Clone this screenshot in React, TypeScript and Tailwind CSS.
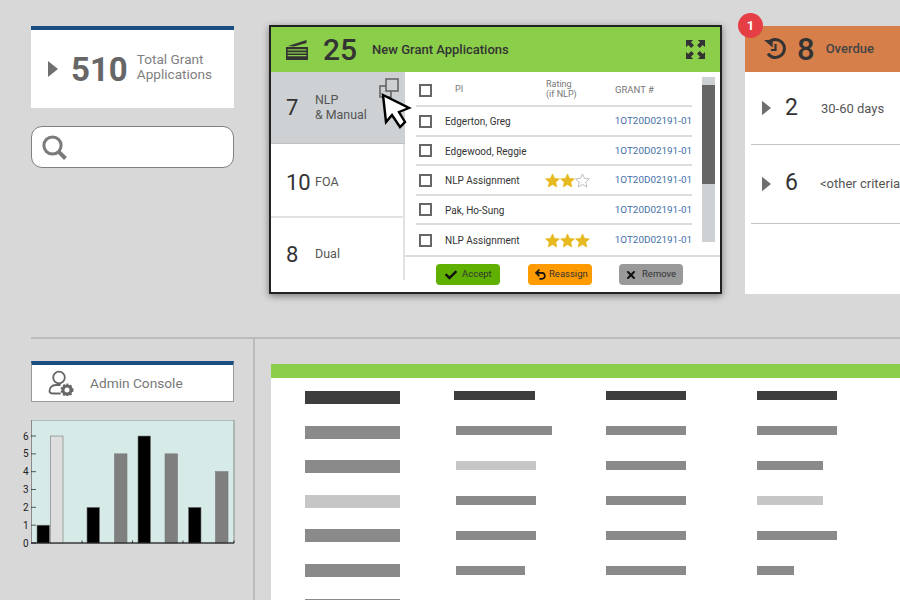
import { FaCheck } from "react-icons/fa";
import { Undo2, X } from "lucide-react";

type Row = { name: string; stars?: number };

const rows: Row[] = [
  { name: "Edgerton, Greg" },
  { name: "Edgewood, Reggie" },
  { name: "NLP Assignment", stars: 2 },
  { name: "Pak, Ho-Sung" },
  { name: "NLP Assignment", stars: 3 },
];

const DARK = "bg-[#3d3d3d]";
const MID = "bg-[#8a8a8a]";
const LIGHT = "bg-[#c6c6c6]";

const columns = [
  {
    className: "w-[95px] ml-[34px] gap-[21.6px] pt-[13px]",
    barH: "h-[13px]",
    bars: [
      { w: "w-[95px]", c: DARK },
      { w: "w-[95px]", c: MID },
      { w: "w-[95px]", c: MID },
      { w: "w-[95px]", c: LIGHT },
      { w: "w-[95px]", c: MID },
      { w: "w-[95px]", c: MID },
      { w: "w-[95px]", c: MID },
    ],
  },
  {
    className: "w-[98px] ml-[54px] gap-[26px] pt-[13px]",
    barH: "h-[9px]",
    bars: [
      { w: "w-[81px]", c: DARK },
      { w: "w-[96px] ml-[2px]", c: MID },
      { w: "w-[80px] ml-[2px]", c: LIGHT },
      { w: "w-[80px] ml-[2px]", c: MID },
      { w: "w-[80px] ml-[2px]", c: MID },
      { w: "w-[69px] ml-[2px]", c: MID },
    ],
  },
  {
    className: "w-[80px] ml-[54px] gap-[26px] pt-[13px]",
    barH: "h-[9px]",
    bars: [
      { w: "w-[80px]", c: DARK },
      { w: "w-[80px]", c: MID },
      { w: "w-[80px]", c: MID },
      { w: "w-[80px]", c: MID },
      { w: "w-[80px]", c: MID },
      { w: "w-[80px]", c: MID },
    ],
  },
  {
    className: "w-[80px] ml-[71px] gap-[26px] pt-[13px]",
    barH: "h-[9px]",
    bars: [
      { w: "w-[80px]", c: DARK },
      { w: "w-[80px]", c: MID },
      { w: "w-[66px]", c: MID },
      { w: "w-[66px]", c: LIGHT },
      { w: "w-[80px]", c: MID },
      { w: "w-[37px]", c: MID },
    ],
  },
];

function Triangle({ className }: { className: string }) {
  return (
    <svg viewBox="0 0 10 16" className={className} fill="#6f6f6f">
      <path d="M0 0 L10 8 L0 16 Z" />
    </svg>
  );
}

function Checkbox() {
  return <div className="w-[13px] h-[13px] border-2 border-[#666] bg-white shrink-0" />;
}

function Star({ filled }: { filled: boolean }) {
  return (
    <svg viewBox="0 0 24 24" className="w-[15px] h-[15px]">
      <path
        d="M12 1.5 L15.2 8.6 L23 9.4 L17.2 14.6 L18.8 22.4 L12 18.4 L5.2 22.4 L6.8 14.6 L1 9.4 L8.8 8.6 Z"
        fill={filled ? "#e6b921" : "#fff"}
        stroke={filled ? "#e6b921" : "#aaa"}
        strokeWidth="1.2"
      />
    </svg>
  );
}

function Stars({ count }: { count: number }) {
  return (
    <div className="flex">
      {[0, 1, 2].map((i) => (
        <Star key={i} filled={i < count} />
      ))}
    </div>
  );
}

function PapersIcon() {
  return (
    <svg viewBox="0 0 22 20" className="w-[22px] h-[20px]" fill="#333">
      <path d="M2 6 L20.5 0 V3 L8 6.5 Z" />
      <path d="M0 7 H22 V20 H0 Z M1.6 9.2 V10.6 H20.4 V9.2 Z M1.6 12.2 V13.4 H20.4 V12.2 Z M1.6 15 V16.2 H20.4 V15 Z" fillRule="evenodd" />
    </svg>
  );
}

function ExpandIcon() {
  return (
    <svg viewBox="0 0 20 20" className="w-[19px] h-[19px]" fill="#333">
      <path d="M0 0 H7.5 L5.2 2.3 L8.4 5.5 L5.5 8.4 L2.3 5.2 L0 7.5 Z" />
      <path d="M20 0 H12.5 L14.8 2.3 L11.6 5.5 L14.5 8.4 L17.7 5.2 L20 7.5 Z" />
      <path d="M0 20 H7.5 L5.2 17.7 L8.4 14.5 L5.5 11.6 L2.3 14.8 L0 12.5 Z" />
      <path d="M20 20 H12.5 L14.8 17.7 L11.6 14.5 L14.5 11.6 L17.7 14.8 L20 12.5 Z" />
    </svg>
  );
}

function SearchIcon() {
  return (
    <svg viewBox="0 0 25 25" className="w-[25px] h-[25px]" fill="none" stroke="#7a7a7a">
      <circle cx="10.5" cy="10.5" r="8.6" strokeWidth="3" />
      <path d="M16.8 16.8 L23.5 23.5" strokeWidth="4" />
    </svg>
  );
}

function HistoryIcon() {
  return (
    <svg viewBox="0 0 22 22" className="w-[22px] h-[22px] shrink-0" fill="none" stroke="#333">
      <path d="M4.6 4.6 A9 9 0 1 1 4 15.6" strokeWidth="3" />
      <path d="M0 2 L8.6 2 L8.6 9.6 Z" fill="#333" stroke="none" />
      <path d="M11.5 6 V12 H7" strokeWidth="2.2" />
    </svg>
  );
}

function AdminIcon() {
  return (
    <svg viewBox="0 0 26 26" className="w-[26px] h-[26px]">
      <circle cx="11" cy="7.5" r="5.8" fill="none" stroke="#666" strokeWidth="1.8" />
      <path
        d="M12 15 H8 C3.5 15 1.5 18 1.5 21 C1.5 23 3 23.5 5 23.5 H12"
        fill="none"
        stroke="#666"
        strokeWidth="1.8"
        strokeLinecap="round"
      />
      <circle cx="19" cy="20" r="4" fill="none" stroke="#666" strokeWidth="3" />
      <circle cx="19" cy="20" r="5.6" fill="none" stroke="#666" strokeWidth="1.8" strokeDasharray="2 1.6" />
    </svg>
  );
}

function Chart() {
  const y = (v: number) => 123 - v * 17.83;
  const bars = [
    { x: 6, v: 1, c: "#000" },
    { x: 19.5, v: 6, c: "#dedede" },
    { x: 56, v: 2, c: "#000" },
    { x: 83.5, v: 5, c: "#7f7f7f" },
    { x: 107, v: 6, c: "#000" },
    { x: 134, v: 5, c: "#7f7f7f" },
    { x: 157.5, v: 2, c: "#000" },
    { x: 184.5, v: 4, c: "#7f7f7f" },
  ];
  return (
    <svg viewBox="-16 0 220 130" className="w-[220px] h-[130px] -ml-[16px] block">
      <rect x="0.5" y="0" width="202.5" height="123" fill="#d6eae8" stroke="#8a8a8a" />
      {bars.map((b) => (
        <rect key={b.x} x={b.x} y={y(b.v)} width="12.5" height={b.v * 17.83} fill={b.c} stroke="#777" strokeWidth="0.6" />
      ))}
      {[0, 1, 2, 3, 4, 5, 6].map((v) => (
        <g key={v}>
          <line x1="0" x2="5" y1={y(v)} y2={y(v)} stroke="#333" strokeWidth="0.8" />
          <text x="-8" y={y(v) + 3.5} fontSize="10" fill="#222" fontFamily="Roboto, sans-serif">
            {v}
          </text>
        </g>
      ))}
      <line x1="0" x2="203" y1="123" y2="123" stroke="#111" strokeWidth="1" />
      {[51, 101.5, 152, 203].map((x) => (
        <line key={x} x1={x} x2={x} y1="120.5" y2="123" stroke="#111" strokeWidth="0.8" />
      ))}
    </svg>
  );
}

export default function App() {
  return (
    <div className="w-[900px] h-[600px] overflow-hidden bg-[#d8d8d8] flex flex-col font-['Roboto',sans-serif] text-[#333]">
      <div className="h-[337px] shrink-0 flex items-start pl-[31px] pt-[26px]">
        {/* left column */}
        <div className="w-[203px] shrink-0 flex flex-col gap-[18px]">
          <div className="h-[82px] bg-white border-t-[4px] border-[#1a4d80] flex items-center pl-[17px]">
            <Triangle className="w-[10px] h-[18px] shrink-0" />
            <span className="ml-[13px] text-[33px] font-bold text-[#666] leading-none">510</span>
            <span className="ml-[9px] mb-[4px] text-[13.6px] leading-[15px] text-[#808080]">
              Total Grant
              <br />
              Applications
            </span>
          </div>
          <div className="h-[42px] bg-white rounded-[11px] border border-[#808080] flex items-center pl-[10px]">
            <SearchIcon />
          </div>
        </div>

        {/* new applications modal */}
        <div className="relative ml-[35px] -mt-[1px] w-[453px] h-[269px] shrink-0 bg-white border-2 border-[#222] shadow-[0_2px_7px_rgba(0,0,0,0.45)] flex flex-col">
          <div className="h-[45px] shrink-0 bg-[#8bce4a] flex items-center pl-[15px] pr-[15px]">
            <PapersIcon />
            <span className="ml-[15px] text-[30px] font-medium leading-none text-[#333]">25</span>
            <span className="ml-[15px] text-[13px] font-medium text-[#333]">New Grant Applications</span>
            <div className="ml-auto">
              <ExpandIcon />
            </div>
          </div>
          <div className="flex flex-1 min-h-0">
            <div className="w-[134px] shrink-0 flex flex-col">
              <div className="h-[72px] bg-[#cdd1d4] flex items-center pl-[15px] border-b border-[#c0c0c0]">
                <span className="text-[22px] w-[29px] text-[#333]">7</span>
                <span className="text-[12.4px] leading-[14.5px] text-[#555]">
                  NLP
                  <br />& Manual
                </span>
              </div>
              <div className="h-[74px] flex items-center pl-[15px] pt-[5px] border-b-2 border-r-2 border-[#e2e2e2]">
                <span className="text-[22px] w-[29px] text-[#333]">10</span>
                <span className="text-[12.5px] text-[#555]">FOA</span>
              </div>
              <div className="h-[62px] flex items-center pl-[15px] pt-[10px] border-r-2 border-[#e2e2e2]">
                <span className="text-[22px] w-[29px] text-[#333]">8</span>
                <span className="text-[12.5px] text-[#555]">Dual</span>
              </div>
            </div>
            <div className="flex-1 flex flex-col min-w-0">
              <div className="flex flex-1 min-h-0">
                <div className="w-[297px] shrink-0 pl-[11px]">
                  <div className="w-[276px] h-[35px] border-b-2 border-[#ddd] flex items-center pl-[3px] pt-[3px]">
                    <Checkbox />
                    <span className="ml-[23px] w-[91px] text-[9px] text-[#777]">PI</span>
                    <span className="w-[69px] -mt-[3px] text-[9px] leading-[10px] text-[#777]">
                      Rating
                      <br />
                      (if NLP)
                    </span>
                    <span className="text-[9.5px] text-[#777]">GRANT #</span>
                  </div>
                  {rows.map((r, i) => (
                    <div
                      key={i}
                      className={`w-[276px] h-[29.5px] flex items-center pl-[3px] pt-[1px] ${
                        i < rows.length - 1 ? "border-b-2 border-[#ddd]" : ""
                      }`}
                    >
                      <Checkbox />
                      <span className="ml-[13px] w-[100px] text-[10px] text-[#333] pt-[1px] whitespace-nowrap">{r.name}</span>
                      <div className="w-[70px]">{r.stars ? <Stars count={r.stars} /> : null}</div>
                      <span className="text-[9.9px] text-[#3f6fa8] pt-[1px] whitespace-nowrap">1OT20D02191-01</span>
                    </div>
                  ))}
                </div>
                <div className="w-[13px] h-[165px] mt-[5px] bg-[#cdd1d4] pt-[8px] shrink-0">
                  <div className="h-[99px] bg-[#666]" />
                </div>
              </div>
              <div className="h-[37px] shrink-0 border-t-2 border-[#ddd] flex items-center text-[9.5px] -ml-[1px] pl-[32px] text-[#333]">
                <div className="w-[64px] h-[21px] rounded-[4px] bg-[#5fb000] flex items-center pl-[9px] gap-[5px]">
                  <FaCheck size={12} className="text-[#111]" />
                  Accept
                </div>
                <div className="ml-[28px] w-[64px] h-[21px] rounded-[4px] bg-[#ff9a00] flex items-center pl-[6px] gap-[2px]">
                  <Undo2 size={13} strokeWidth={3} className="text-[#111]" />
                  Reassign
                </div>
                <div className="ml-[27px] w-[64px] h-[21px] rounded-[4px] bg-[#999] flex items-center pl-[6px] gap-[5px]">
                  <X size={12} strokeWidth={4} className="text-[#111]" />
                  Remove
                </div>
              </div>
            </div>
          </div>

          {/* drag squares and pointer */}
          <svg viewBox="0 0 34 52" className="absolute left-[108px] top-[50px] w-[34px] h-[52px]">
            <rect x="1" y="9" width="11" height="11" fill="none" stroke="#666" strokeWidth="1.6" />
            <rect x="7" y="2" width="12" height="12" fill="#cdd1d4" stroke="#666" strokeWidth="1.6" />
            <path d="M4 18 L7 45 L13 38 L21 50 L26 45 L20 35 L30 31 Z" fill="#fff" stroke="#000" strokeWidth="2.4" />
          </svg>
        </div>

        {/* overdue */}
        <div className="relative ml-[23px] w-[155px] h-[268px] shrink-0 bg-white">
          <div className="absolute -left-[7px] -top-[13px] w-[25px] h-[25px] rounded-full bg-[#e53e44] text-white text-[13px] font-bold flex items-center justify-center">
            1
          </div>
          <div className="h-[46px] bg-[#d67f4a] flex items-center pl-[19px]">
            <HistoryIcon />
            <span className="ml-[11px] text-[31px] font-medium leading-none text-[#333]">8</span>
            <span className="ml-[11px] text-[13px] font-medium text-[#444]">Overdue</span>
          </div>
          <div className="overflow-hidden">
            <div className="h-[73px] ml-[6px] border-b border-[#c4c4c4] flex items-center pl-[11px] whitespace-nowrap">
              <Triangle className="w-[9px] h-[16px] shrink-0" />
              <span className="ml-[14px] w-[36px] shrink-0 text-[23px] text-[#333]">2</span>
              <span className="mt-[1px] text-[13px] text-[#555]">30-60 days</span>
            </div>
            <div className="h-[79px] ml-[6px] border-b border-[#c4c4c4] flex items-center pl-[11px] whitespace-nowrap">
              <Triangle className="w-[9px] h-[16px] shrink-0" />
              <span className="ml-[14px] mb-[2px] w-[35px] shrink-0 text-[23px] text-[#333]">6</span>
              <span className="text-[13px] text-[#555]">&lt;other criteria&gt;</span>
            </div>
          </div>
        </div>
      </div>

      <div className="h-[2px] ml-[31px] shrink-0 bg-[#bbb]" />

      <div className="flex flex-1 min-h-0">
        <div className="w-[224px] shrink-0 ml-[31px] pt-[22px]">
          <div className="w-[203px] flex flex-col gap-[18px]">
            <div className="h-[41px] bg-white border-x-[1.5px] border-b-[1.5px] border-[#999] border-t-[4px] border-t-[#1a4d80] flex items-center pl-[16px]">
              <AdminIcon />
              <span className="ml-[16px] text-[13.7px] text-[#777]">Admin Console</span>
            </div>
            <Chart />
          </div>
        </div>
        <div className="w-[2px] shrink-0 bg-[#bbb] -ml-[2px]" />
        <div className="flex-1 min-w-0 pl-[16px] pt-[25px]">
          <div className="h-[14px] bg-[#8bce4a]" />
          <div className="h-[300px] bg-white flex">
            {columns.map((col, i) => (
              <div key={i} className={`flex flex-col shrink-0 ${col.className}`}>
                {col.bars.map((b, j) => (
                  <div key={j} className={`${col.barH} ${b.w} ${b.c}`} />
                ))}
              </div>
            ))}
          </div>
        </div>
      </div>
    </div>
  );
}
